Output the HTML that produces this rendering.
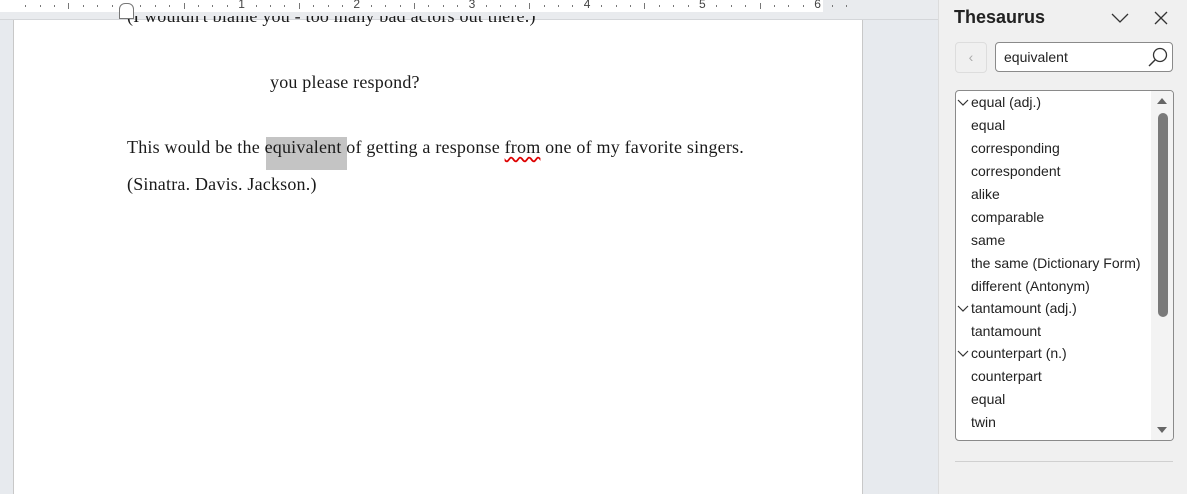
<!DOCTYPE html>
<html><head><style>
body{margin:0;width:1187px;height:494px;overflow:hidden;background:#e7eaee;font-family:"Liberation Sans",sans-serif;position:relative}
.ruler{position:absolute;left:0;top:0;width:823px;height:12px;background:#fff}
.rulerbg{position:absolute;left:0;top:0;width:938px;height:19px;background:#e9ebee;border-bottom:1px solid #d4d6d9}
.page{position:absolute;left:13px;top:20px;width:848px;height:474px;background:#fff;border-left:1px solid #c8c8c8;border-right:1px solid #c8c8c8}
.t{position:absolute;font-family:"Liberation Serif",serif;font-size:18px;letter-spacing:0.2px;color:#1a1a1a;white-space:nowrap}
.pane{position:absolute;left:938px;top:0;width:249px;height:494px;background:#f0f0f0;border-left:1px solid #dcdcdc}
.list{position:absolute;left:16px;top:90px;width:217px;height:349px;background:#fff;border:1px solid #8a8a8a;border-radius:4px;overflow:hidden}
.it{position:absolute;left:15px;font-size:14px;color:#222}
.hd svg{position:absolute;left:-14px;top:5px}
</style></head><body>
<div class="rulerbg"></div>
<div class="ruler" id="r"></div>
<div class="page">
<div class="t" style="left:113px;top:-14px;clip-path:inset(10px 0 0 0)">(I wouldn't blame you - too many bad actors out there.)</div>
<div class="t" style="left:256px;top:52px">you please respond?</div>
<div style="position:absolute;left:252px;top:117px;width:81px;height:33px;background:#c4c4c4"></div>
<div class="t" style="left:113px;top:117px">This would be the equivalent of getting a response <span style="text-decoration:underline wavy #d00;text-underline-offset:3px">from</span> one of my favorite singers.</div>
<div class="t" style="left:113px;top:154px">(Sinatra. Davis. Jackson.)</div>
</div>
<div style="position:absolute;left:119px;top:3px;width:13px;height:14px;border:1px solid #777;border-radius:6px 6px 0 0;background:#fff"></div>
<div class="pane">
<div style="position:absolute;left:15px;top:7px;font-size:18px;font-weight:bold;color:#222">Thesaurus</div>
<svg style="position:absolute;left:171px;top:11px" width="60" height="14"><path d="M2 3l8 8 8-8" fill="none" stroke="#333" stroke-width="1.3"/><path d="M45 1l12 12M57 1L45 13" stroke="#333" stroke-width="1.3"/></svg>
<div style="position:absolute;left:16px;top:42px;width:30px;height:29px;border:1px solid #ddd;border-radius:4px;background:#f0f0f0;color:#aaa;font-size:14px;text-align:center;line-height:29px">‹</div>
<div style="position:absolute;left:56px;top:42px;width:176px;height:28px;border:1px solid #8a8a8a;border-radius:4px;background:#fff"><span style="position:absolute;left:8px;top:6px;font-size:14px;color:#222">equivalent</span>
<svg style="position:absolute;left:151px;top:3px" width="22" height="22"><circle cx="13" cy="9" r="6.5" fill="none" stroke="#333" stroke-width="1.3"/><path d="M8.5 13.5L2 20" stroke="#333" stroke-width="1.4"/></svg></div>
<div class="list">
<div style="position:absolute;right:0;top:0;width:22px;height:349px;background:#f3f3f3"></div>
<div style="position:absolute;right:5px;top:22px;width:10px;height:204px;background:#7a7a7a;border-radius:5px"></div>
<svg style="position:absolute;right:5px;top:6px" width="12" height="8"><path d="M1 7L6 1 11 7z" fill="#666"/></svg>
<svg style="position:absolute;right:5px;top:335px" width="12" height="8"><path d="M1 1L6 7 11 1z" fill="#666"/></svg>
<div class="it hd" style="top:3px"><svg width="12" height="8"><path d="M1 1l5 5 5-5" fill="none" stroke="#333" stroke-width="1.2"/></svg>equal (adj.)</div>
<div class="it" style="top:26px">equal</div>
<div class="it" style="top:49px">corresponding</div>
<div class="it" style="top:72px">correspondent</div>
<div class="it" style="top:95px">alike</div>
<div class="it" style="top:118px">comparable</div>
<div class="it" style="top:141px">same</div>
<div class="it" style="top:164px">the same (Dictionary Form)</div>
<div class="it" style="top:187px">different (Antonym)</div>
<div class="it hd" style="top:209px"><svg width="12" height="8"><path d="M1 1l5 5 5-5" fill="none" stroke="#333" stroke-width="1.2"/></svg>tantamount (adj.)</div>
<div class="it" style="top:232px">tantamount</div>
<div class="it hd" style="top:254px"><svg width="12" height="8"><path d="M1 1l5 5 5-5" fill="none" stroke="#333" stroke-width="1.2"/></svg>counterpart (n.)</div>
<div class="it" style="top:277px">counterpart</div>
<div class="it" style="top:300px">equal</div>
<div class="it" style="top:323px">twin</div>
</div>
<div style="position:absolute;left:16px;top:461px;width:218px;height:1px;background:#d0d0d0"></div>
</div>
<script>
var r=document.getElementById('r'),h='';
for(var i=-8;i<=50;i++){var x=126+i*14.4;if(x<2||x>860)continue;
if(i%8==0&&i>0){h+='<span style="position:absolute;left:'+(x-3)+'px;top:-3px;font-size:12px;color:#444">'+(i/8)+'</span>';}
else if(i%8==0){}
else if(i%4==0){h+='<span style="position:absolute;left:'+x+'px;top:3px;width:1px;height:6px;background:#777"></span>';}
else{h+='<span style="position:absolute;left:'+x+'px;top:5px;width:1px;height:2px;background:#777"></span>';}}
r.innerHTML=h;r.style.overflow='visible';
</script>
</body></html>
